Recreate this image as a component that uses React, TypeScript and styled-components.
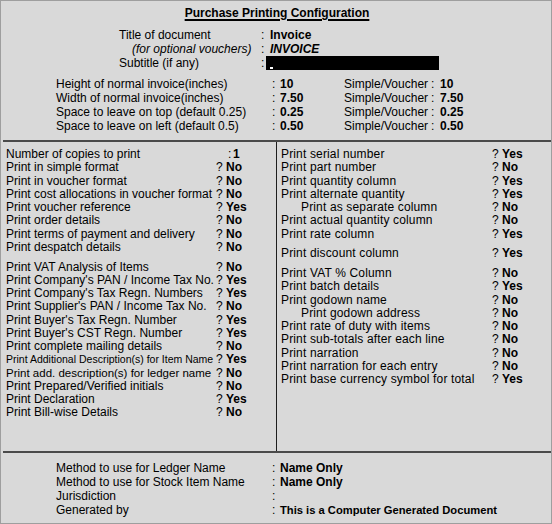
import React from "react";
import styled, { createGlobalStyle } from "styled-components";

const GlobalStyle = createGlobalStyle`
  html, body {
    margin: 0;
    padding: 0;
    background: #d9d9d9;
  }
`;

type Opt = { label: string; value: string; indent?: boolean; size?: number; gapBefore?: boolean };

const leftOptions: Opt[] = [
  { label: "Print in simple format", value: "No" },
  { label: "Print in voucher format", value: "No" },
  { label: "Print cost allocations in voucher format", value: "No" },
  { label: "Print voucher reference", value: "Yes" },
  { label: "Print order details", value: "No" },
  { label: "Print terms of payment and delivery", value: "No" },
  { label: "Print despatch details", value: "No" },
  { label: "Print VAT Analysis of Items", value: "No", gapBefore: true },
  { label: "Print Company's PAN / Income Tax No.", value: "Yes" },
  { label: "Print Company's Tax Regn. Numbers", value: "Yes" },
  { label: "Print Supplier's PAN / Income Tax No.", value: "No" },
  { label: "Print Buyer's Tax Regn. Number", value: "Yes" },
  { label: "Print Buyer's CST Regn. Number", value: "Yes" },
  { label: "Print complete mailing details", value: "No" },
  { label: "Print Additional Description(s) for Item Name", value: "Yes", size: 10.5 },
  { label: "Print add. description(s) for ledger name", value: "No", size: 11.5 },
  { label: "Print Prepared/Verified initials", value: "No" },
  { label: "Print Declaration", value: "Yes" },
  { label: "Print Bill-wise Details", value: "No" },
];

const rightOptions: Opt[] = [
  { label: "Print serial number", value: "Yes" },
  { label: "Print part number", value: "No" },
  { label: "Print quantity column", value: "Yes" },
  { label: "Print alternate quantity", value: "Yes" },
  { label: "Print as separate column", value: "No", indent: true },
  { label: "Print actual quantity column", value: "No" },
  { label: "Print rate column", value: "Yes" },
  { label: "Print discount column", value: "Yes", gapBefore: true },
  { label: "Print VAT % Column", value: "No", gapBefore: true },
  { label: "Print batch details", value: "Yes" },
  { label: "Print godown name", value: "No" },
  { label: "Print godown address", value: "No", indent: true },
  { label: "Print rate of duty with items", value: "No" },
  { label: "Print sub-totals after each line", value: "No" },
  { label: "Print narration", value: "No" },
  { label: "Print narration for each entry", value: "No" },
  { label: "Print base currency symbol for total", value: "Yes" },
];

const sizes = [
  { label: "Height of normal invoice(inches)", value: "10", simple: "10" },
  { label: "Width of normal invoice(inches)", value: "7.50", simple: "7.50" },
  { label: "Space to leave on top (default 0.25)", value: "0.25", simple: "0.25" },
  { label: "Space to leave on left (default 0.5)", value: "0.50", simple: "0.50" },
];

const footer = [
  { label: "Method to use for Ledger Name", value: "Name Only" },
  { label: "Method to use for Stock Item Name", value: "Name Only" },
  { label: "Jurisdiction", value: "" },
  { label: "Generated by", value: "This is a Computer Generated Document", size: 11.2 },
];

const App = () => {
  return (
    <>
      <GlobalStyle />
      <Frame>
        <Header>
          <Title>Purchase Printing Configuration</Title>
          <Block $top={8} $left={118}>
            <Row $cols="142px 9px auto" $lh={14}>
              <Label>Title of document</Label>
              <Sep>:</Sep>
              <Value>Invoice</Value>
            </Row>
            <Row $cols="142px 9px auto" $lh={14}>
              <Label $italic $indent={13}>(for optional vouchers)</Label>
              <Sep>:</Sep>
              <Value $italic>INVOICE</Value>
            </Row>
            <Row $cols="142px 9px auto" $lh={14}>
              <Label>Subtitle (if any)</Label>
              <Sep>:</Sep>
              <SubtitleBox>
                <Cursor />
              </SubtitleBox>
            </Row>
          </Block>
          <Block $top={7} $left={55}>
            {sizes.map((s) => (
              <Row key={s.label} $cols="216px 8px 64px 87px 9px auto" $lh={14}>
                <Label>{s.label}</Label>
                <Sep>:</Sep>
                <Value>{s.value}</Value>
                <Label>Simple/Voucher</Label>
                <Sep>:</Sep>
                <Value>{s.simple}</Value>
              </Row>
            ))}
          </Block>
        </Header>
        <Rule />
        <Columns>
          <Column $pad={5}>
            <Row $cols="222px 5px auto" $lh={13.25}>
              <Label>Number of copies to print</Label>
              <Sep>:</Sep>
              <Value>1</Value>
            </Row>
            {leftOptions.map((o) => (
              <React.Fragment key={o.label}>
                {o.gapBefore && <Spacer />}
                <Row $cols="210px 10px auto" $lh={13.25}>
                  <Label $size={o.size}>{o.label}</Label>
                  <Sep>?</Sep>
                  <Value>{o.value}</Value>
                </Row>
              </React.Fragment>
            ))}
          </Column>
          <Column $pad={4} $divider>
            {rightOptions.map((o) => (
              <React.Fragment key={o.label}>
                {o.gapBefore && <Spacer />}
                <Row $cols="211px 10px auto" $lh={13.25}>
                  <Label $indent={o.indent ? 20 : 0} $spaced>
                    {o.label}
                  </Label>
                  <Sep>?</Sep>
                  <Value>{o.value}</Value>
                </Row>
              </React.Fragment>
            ))}
          </Column>
        </Columns>
        <Rule />
        <Block $top={8} $left={55}>
          {footer.map((f) => (
            <Row key={f.label} $cols="216px 8px auto" $lh={14}>
              <Label>{f.label}</Label>
              <Sep>:</Sep>
              <Value $size={f.size}>{f.value}</Value>
            </Row>
          ))}
        </Block>
      </Frame>
    </>
  );
};

const Frame = styled.div`
  width: 552px;
  height: 524px;
  box-sizing: border-box;
  border: 1px solid #9e9e9e;
  background: #d9d9d9;
  color: #000;
  font-family: "Liberation Sans", Arial, sans-serif;
  font-size: 12px;
  overflow: hidden;
`;

const Header = styled.div`
  height: 139px;
  box-sizing: border-box;
  padding-top: 5px;
`;

const Title = styled.div`
  text-align: center;
  font-weight: bold;
  line-height: 14px;
  text-decoration: underline;
  text-decoration-thickness: 1.5px;
  text-underline-offset: 2px;
  padding-left: 2px;
`;

const Block = styled.div<{ $top: number; $left: number }>`
  margin-top: ${(p) => p.$top}px;
  padding-left: ${(p) => p.$left}px;
`;

const Row = styled.div<{ $cols: string; $lh: number }>`
  display: grid;
  grid-template-columns: ${(p) => p.$cols};
  align-items: center;
  height: ${(p) => p.$lh}px;
  line-height: ${(p) => p.$lh}px;
  white-space: nowrap;
`;

const Label = styled.span<{ $italic?: boolean; $indent?: number; $size?: number; $spaced?: boolean }>`
  font-style: ${(p) => (p.$italic ? "italic" : "normal")};
  padding-left: ${(p) => p.$indent || 0}px;
  font-size: ${(p) => p.$size || 12}px;
  letter-spacing: ${(p) => (p.$spaced ? "0.15px" : "normal")};
`;

const Sep = styled.span`
  font-weight: normal;
`;

const Value = styled.span<{ $italic?: boolean; $size?: number }>`
  font-weight: bold;
  font-style: ${(p) => (p.$italic ? "italic" : "normal")};
  font-size: ${(p) => p.$size || 12}px;
`;

const SubtitleBox = styled.div`
  margin-left: -4px;
  width: 173px;
  height: 14px;
  background: #000;
  display: flex;
  align-items: flex-end;
  padding: 0 0 1px 4px;
  box-sizing: border-box;
`;

const Cursor = styled.span`
  width: 3px;
  height: 2px;
  background: #fff;
`;

const Rule = styled.div`
  height: 2px;
  margin-left: 2px;
  background: #4a4a4a;
`;

const Columns = styled.div`
  display: grid;
  grid-template-columns: 275px 1fr;
  height: 309px;
`;

const Column = styled.div<{ $pad: number; $divider?: boolean }>`
  padding: 6px 0 0 ${(p) => p.$pad}px;
  border-left: ${(p) => (p.$divider ? "1px solid #1e1e1e" : "none")};
`;

const Spacer = styled.div`
  height: 6.6px;
`;

export default App;
